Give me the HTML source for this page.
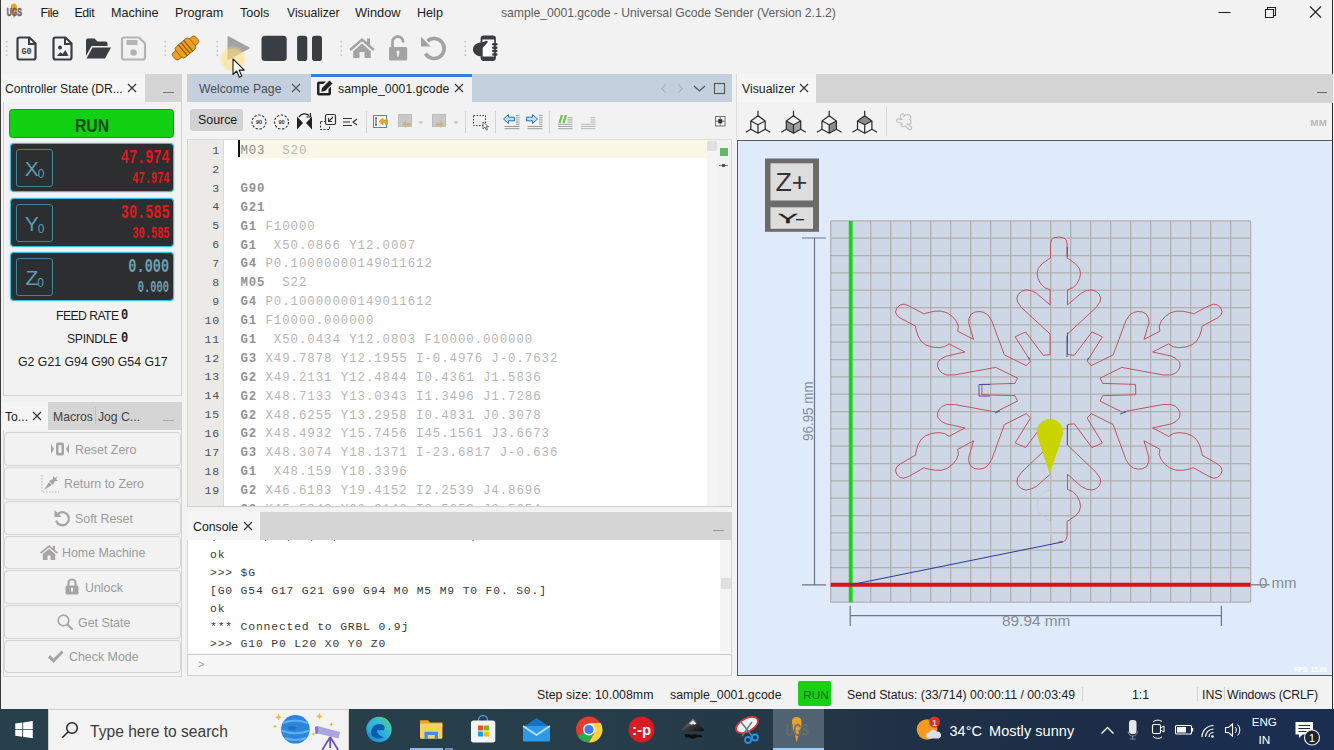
<!DOCTYPE html>
<html lang="en">
<head>
<meta charset="utf-8">
<title>sample_0001.gcode - Universal Gcode Sender (Version 2.1.2)</title>
<style>
*{box-sizing:border-box;margin:0;padding:0}
html,body{width:1334px;height:750px;overflow:hidden}
body{position:relative;background:#f2f2f2;font-family:"Liberation Sans",sans-serif;font-size:12.2px;color:#1c1c1c}
.a{position:absolute}
.t{position:absolute;white-space:pre;line-height:16px}
.mono{font-family:"Liberation Mono",monospace}
svg{position:absolute;overflow:visible}
/* panels */
.tabbar{position:absolute;background:#d5d5d5}
.tab{position:absolute;background:#f5f5f5}
.btn{position:absolute;left:4px;width:177px;height:33.600px;border:1px solid #d3d3d3;border-radius:4px;background:#f2f2f2;color:#9b9b9b;font-size:12.400px}
.btn span{position:absolute;top:8.500px;line-height:16px;white-space:pre}
.dro{position:absolute;left:9.500px;width:164.500px;height:49px;background:#2d2e30;border:1.300px solid #35bfe0;border-radius:4px;box-shadow:0 0 1.500px #4cc8e6}
.dro .ax{position:absolute;left:5.200px;top:5px;width:37px;height:38px;border:1px solid #3e8796;border-radius:3px;color:#5b9db0;font-size:21px;line-height:37px;text-align:center;letter-spacing:-1px}
.dro .ax sub{font-size:12px;vertical-align:-2px}
.dro .big,.dro .small{position:absolute;right:3.500px;white-space:pre;font-family:"Liberation Mono",monospace;transform-origin:100% 50%}
.dro .big{top:3px;font-size:21px;line-height:22px;transform:scaleX(.645);font-weight:bold}
.dro .small{top:27px;font-size:16px;line-height:16px;transform:scaleX(.65);font-weight:bold}
.red{color:#e3181c}.cy{color:#6ea0b1}
.ln{position:absolute;left:188px;width:32.200px;text-align:right;font-family:"Liberation Mono",monospace;font-size:11.600px;letter-spacing:0.900px;color:#505050;line-height:19px}
.code{position:absolute;left:239px;font-family:"Liberation Mono",monospace;font-size:12.400px;letter-spacing:0.930px;line-height:19px;white-space:pre;color:#b6b6b6}
.code b{color:#939393}
.con{position:absolute;left:210px;font-family:"Liberation Mono",monospace;font-size:11.400px;letter-spacing:0.820px;line-height:18px;white-space:pre;color:#383838}
.tb{position:absolute;color:#fff}
</style>
</head>
<body>
<!-- window left edge -->
<div class="a" style="left:0;top:0;width:1px;height:709px;background:#3a3a3a"></div>
<div class="a" style="left:1332.300px;top:0;width:1.200px;height:709px;background:#2a2a2a"></div>
<!-- app icon -->
<svg style="left:0;top:0" width="26" height="24" viewBox="0 0 26 24">
 <path d="M13.900 3.400c1.800 0 2.900 1.200 2.900 2.800v4.800l-1.400 3-1.500 5-1.500-5-1.400-3v-4.800c0-1.600 1.100-2.800 2.900-2.800z" fill="#f0a020"/>
 <text x="6.800" y="15.600" font-family="Liberation Sans, sans-serif" font-weight="bold" font-size="10.600" fill="#6b645c" stroke="#6b645c" stroke-width="0.550" textLength="15.200" lengthAdjust="spacingAndGlyphs">UGS</text>
</svg>
<!-- menu -->
<div class="t" style="left:40.500px;top:5px;font-size:12.400px;letter-spacing:-0.5px">File</div>
<div class="t" style="left:74.500px;top:5px;font-size:12.400px;letter-spacing:-0.4px">Edit</div>
<div class="t" style="left:111px;top:5px;font-size:12.6px">Machine</div>
<div class="t" style="left:175px;top:5px;font-size:12.6px">Program</div>
<div class="t" style="left:240px;top:5px;font-size:12.6px">Tools</div>
<div class="t" style="left:287px;top:5px;font-size:12.2px">Visualizer</div>
<div class="t" style="left:355px;top:5px;font-size:12.8px">Window</div>
<div class="t" style="left:417px;top:5px;font-size:12.6px">Help</div>
<div class="t" style="left:501px;top:5px;font-size:12.2px;color:#5e5e5e;letter-spacing:-0.02px">sample_0001.gcode - Universal Gcode Sender (Version 2.1.2)</div>
<!-- window controls -->
<svg style="left:1210px;top:0" width="124" height="26" viewBox="0 0 124 26" fill="none" stroke="#222" stroke-width="1.1">
 <path d="M8.5 12.5h12"/>
 <path d="M55.500 9.500h8v8h-8z M57.500 9.500v-2h8v8h-2"/>
 <path d="M100 6.500l11 11M111 6.500l-11 11"/>
</svg>
<!-- main toolbar -->
<svg style="left:0;top:30px" width="520" height="40" viewBox="0 30 520 40">
 <!-- separators (dotted grips) -->
 <g fill="#c2c2c2">
  <rect x="5.800" y="41" width="1.600" height="1.600"/><rect x="5.800" y="45.5" width="1.600" height="1.600"/><rect x="5.800" y="50" width="1.600" height="1.600"/><rect x="5.800" y="54.5" width="1.600" height="1.600"/><rect x="164.5" y="41" width="1.600" height="1.600"/><rect x="164.5" y="45.5" width="1.600" height="1.600"/><rect x="164.5" y="50" width="1.600" height="1.600"/><rect x="164.5" y="54.5" width="1.600" height="1.600"/><rect x="216.5" y="41" width="1.600" height="1.600"/><rect x="216.5" y="45.5" width="1.600" height="1.600"/><rect x="216.5" y="50" width="1.600" height="1.600"/><rect x="216.5" y="54.5" width="1.600" height="1.600"/><rect x="340.5" y="41" width="1.600" height="1.600"/><rect x="340.5" y="45.5" width="1.600" height="1.600"/><rect x="340.5" y="50" width="1.600" height="1.600"/><rect x="340.5" y="54.5" width="1.600" height="1.600"/><rect x="464.5" y="41" width="1.600" height="1.600"/><rect x="464.5" y="45.5" width="1.600" height="1.600"/><rect x="464.5" y="50" width="1.600" height="1.600"/><rect x="464.5" y="54.5" width="1.600" height="1.600"/>
 </g>
 <!-- G0 file -->
 <path d="M19.500 37.500h10l6 6v14a2 2 0 0 1-2 2h-14a2 2 0 0 1-2-2v-18a2 2 0 0 1 2-2z" fill="none" stroke="#3a3d42" stroke-width="2.200"/>
 <path d="M29 37.500v6.500h6.500" fill="none" stroke="#3a3d42" stroke-width="2"/>
 <text x="26.500" y="54" font-family="Liberation Mono, monospace" font-size="8.500" font-weight="bold" text-anchor="middle" fill="#3a3d42">G0</text>
 <!-- image file -->
 <path d="M55.500 37.500h10l6 6v14a2 2 0 0 1-2 2h-14a2 2 0 0 1-2-2v-18a2 2 0 0 1 2-2z" fill="none" stroke="#3a3d42" stroke-width="2.200"/>
 <path d="M65 37.500v6.500h6.500" fill="none" stroke="#3a3d42" stroke-width="2"/>
 <circle cx="60" cy="47.500" r="2" fill="#3a3d42"/>
 <path d="M57 56l3.500-4 2 2 3-4 3 6z" fill="#3a3d42"/>
 <!-- open folder -->
 <path d="M86 40.500a2 2 0 0 1 2-2h6.500l3 3h8a2 2 0 0 1 2 2v2.500h-16l-5.500 10z" fill="#3a3d42"/>
 <path d="M92.500 47.500h18.500l-6 11h-18.500z" fill="#3a3d42"/>
 <!-- save (disabled) -->
 <path d="M124 37.500h15l6 6v14a2 2 0 0 1-2 2h-19a2 2 0 0 1-2-2v-18a2 2 0 0 1 2-2z" fill="none" stroke="#b4b4b4" stroke-width="2.200"/>
 <rect x="126.500" y="40" width="11" height="5" fill="#b4b4b4"/>
 <circle cx="133.500" cy="52.500" r="3.300" fill="#b4b4b4"/>
 <!-- connect (orange plug) -->
 <g transform="translate(185.500 48) rotate(-40)">
  <rect x="-15" y="-4.500" width="30" height="9" rx="3" fill="#f0a020" stroke="#8a5a10" stroke-width="0.800"/>
  <rect x="-9" y="-7" width="18" height="14" rx="3" fill="#f0a020" stroke="#8a5a10" stroke-width="0.800"/>
  <path d="M-3.500 -7v14M0 -7v14M3.500 -7v14" stroke="#8a5a10" stroke-width="1.300"/>
 </g>
 <!-- play (disabled) -->
 <path d="M228.300 37l20.500 11-20.500 11z" fill="#a3a3a3" stroke="#a3a3a3" stroke-width="1.600" stroke-linejoin="round"/>
 <!-- mouse highlight -->
 <defs><radialGradient id="mh"><stop offset="0" stop-color="#fce17a" stop-opacity="0.620"/><stop offset="0.720" stop-color="#fce17a" stop-opacity="0.600"/><stop offset="1" stop-color="#fce17a" stop-opacity="0"/></radialGradient></defs>
 <circle cx="232.800" cy="59.200" r="13.800" fill="url(#mh)"/>
 <!-- stop -->
 <rect x="261.500" y="35.800" width="25.200" height="25.200" rx="3.500" fill="#3a3d42"/>
 <!-- pause -->
 <rect x="297.100" y="35.800" width="10.200" height="25.200" rx="2.800" fill="#3a3d42"/>
 <rect x="312" y="35.800" width="10" height="25.200" rx="2.800" fill="#3a3d42"/>
 <!-- home (disabled) -->
 <path d="M362 38l-12.700 11 1.600 1.900 11.100-9.600 11.100 9.600 1.600-1.900-4.600-4v-6.500h-3.200v3.700z" fill="#a3a3a3"/>
 <path d="M362 43.600l-8.800 7.600v6.800h6.300v-6h5v6h6.300v-6.800z" fill="#a3a3a3"/>
 <!-- lock open (disabled) -->
 <path d="M392.500 47v-4.500a5.300 5.300 0 0 1 10.600-1.200" fill="none" stroke="#a3a3a3" stroke-width="2.800" stroke-linecap="round"/>
 <rect x="389" y="47" width="18.200" height="13.400" rx="1.500" fill="#a3a3a3"/>
 <circle cx="398" cy="52" r="1.600" fill="#f2f2f2"/><rect x="397.100" y="52" width="1.800" height="4.500" fill="#f2f2f2"/>
 <!-- reset (disabled) -->
 <path d="M427.500 41a10 10 0 1 1-2 12.500" fill="none" stroke="#a3a3a3" stroke-width="3.700"/>
 <path d="M421 36.800v9.700h9.700z" fill="#a3a3a3"/>
 <!-- pendant phone -->
 <rect x="481.500" y="36.500" width="13.500" height="23.500" rx="2.200" fill="#fff" stroke="#3a3d42" stroke-width="1.800"/>
 <rect x="481.500" y="36.500" width="13.500" height="3" rx="1" fill="#3a3d42"/><rect x="481.500" y="56.500" width="13.500" height="3.500" rx="1" fill="#3a3d42"/>
 <path d="M482.500 42.200c-5.500 0-9.500 3-9.500 7.200s4 7 9.500 7v-8.500l5-5.500c.8-1.200-.5-2.300-1.800-1.500z" fill="#3a3d42"/>
 <rect x="492" y="43" width="5.500" height="2.500" rx="1.200" fill="#3a3d42"/><rect x="492" y="46.400" width="5.500" height="2.500" rx="1.200" fill="#3a3d42"/><rect x="492" y="49.800" width="5.500" height="2.500" rx="1.200" fill="#3a3d42"/><rect x="492" y="53.200" width="5.500" height="2.500" rx="1.200" fill="#3a3d42"/>
</svg>
<!-- cursor -->
<svg style="left:232.300px;top:58.400px;z-index:20" width="14" height="20" viewBox="0 0 14 20"><path d="M1 1v15.500l3.700-3.500 2.700 6.200 2.400-1.100-2.700-6h5.200z" fill="#fff" stroke="#1a1a1a" stroke-width="1.100" stroke-linejoin="round"/></svg>
<!-- LEFT: controller state panel -->
<div class="tabbar" style="left:3px;top:74px;width:179px;height:28px"></div>
<div class="tab" style="left:3px;top:74px;width:142px;height:28px"></div>
<div class="t" style="left:5px;top:81px;font-size:12.2px;letter-spacing:-0.1px">Controller State (DR...</div>
<svg style="left:127px;top:83px" width="10" height="10" viewBox="0 0 10 10"><path d="M1 1l8 8M9 1l-8 8" stroke="#333" stroke-width="1.100"/></svg>
<div class="a" style="left:163px;top:92px;width:11px;height:1px;background:#777"></div>
<div class="a" style="left:3px;top:102px;width:179px;height:294px;border:1px solid #d2d2d2;border-top:none;background:#f2f2f2"></div>
<!-- RUN -->
<div class="a" style="left:9px;top:109px;width:165px;height:29px;background:#12d012;border:1px solid #0e9a12;border-radius:3.500px"></div>
<div class="t" style="left:42px;top:115.400px;width:100px;text-align:center;font-size:18.500px;line-height:22px;font-weight:bold;color:#0c4d12;transform:scaleX(.85)">RUN</div>
<!-- DROs -->
<div class="dro" style="top:142.800px"><div class="ax">X<sub>0</sub></div><div class="big red">47.974</div><div class="small red">47.974</div></div>
<div class="dro" style="top:197.500px"><div class="ax">Y<sub>0</sub></div><div class="big red">30.585</div><div class="small red">30.585</div></div>
<div class="dro" style="top:252px"><div class="ax">Z<sub>0</sub></div><div class="big cy">0.000</div><div class="small cy">0.000</div></div>
<div class="t" style="left:56px;top:308px;font-size:12.2px;letter-spacing:-0.55px">FEED RATE</div>
<div class="t mono" style="left:121px;top:308.300px;font-size:15px;font-weight:bold;transform:scaleX(.8);transform-origin:0 50%">0</div>
<div class="t" style="left:67px;top:331px;font-size:12.2px;letter-spacing:-0.3px">SPINDLE</div>
<div class="t mono" style="left:121px;top:331.300px;font-size:15px;font-weight:bold;transform:scaleX(.8);transform-origin:0 50%">0</div>
<div class="t" style="left:18px;top:354px;font-size:12.300px">G2 G21 G94 G90 G54 G17</div>

<!-- LEFT: toolbox panel -->
<div class="tabbar" style="left:3px;top:402px;width:179px;height:28px"></div>
<div class="tab" style="left:3px;top:402px;width:45px;height:28px"></div>
<div class="t" style="left:5px;top:409px;font-size:12.2px">To...</div>
<svg style="left:32px;top:411px" width="10" height="10" viewBox="0 0 10 10"><path d="M1 1l8 8M9 1l-8 8" stroke="#333" stroke-width="1.100"/></svg>
<div class="t" style="left:53px;top:409px;font-size:12.2px;color:#444">Macros</div>
<div class="a" style="left:95px;top:407px;width:1px;height:17px;background:#c2c2c2"></div>
<div class="t" style="left:98px;top:409px;font-size:12.2px;color:#444">Jog C...</div>
<div class="a" style="left:163px;top:420px;width:11px;height:1px;background:#aaa"></div>
<div class="a" style="left:3px;top:430px;width:179px;height:247px;border:1px solid #d6d6d6;border-top:none"></div>

<div class="btn" style="top:432px"><svg style="left:46px;top:9px" width="18" height="14" viewBox="0 0 18 14"><path d="M0 2l3 5-3 5zM18 2l-3 5 3 5z" fill="#a5a5a5"/><rect x="5" y="0.500" width="8" height="13" rx="2" fill="#a5a5a5"/><rect x="7.500" y="3" width="3" height="8" rx="1" fill="#f2f2f2"/></svg><span style="left:70px">Reset Zero</span></div>
<div class="btn" style="top:466.600px"><svg style="left:36px;top:7px" width="19" height="18" viewBox="0 0 19 18"><path d="M1 0v17h17" fill="none" stroke="#b5b5b5" stroke-width="1" stroke-dasharray="1.500 1.500"/><path d="M3 15l5-8 3 3zM8 6l4-2 0-3 2 2 3-2-2 3 2 2-3 0-2 4z" fill="#a5a5a5"/></svg><span style="left:59px">Return to Zero</span></div>
<div class="btn" style="top:501.200px"><svg style="left:48px;top:7px" width="18" height="18" viewBox="0 0 18 18"><path d="M5.500 4.500a6.500 6.500 0 1 1-2 8" fill="none" stroke="#a5a5a5" stroke-width="2.300" stroke-linecap="round"/><path d="M1.500 1v7h7z" fill="#a5a5a5"/></svg><span style="left:70px">Soft Reset</span></div>
<div class="btn" style="top:535.800px"><svg style="left:35px;top:8px" width="18" height="15" viewBox="0 0 18 15"><path d="M9 0l-9 7.500 1.200 1.300 7.800-6.500 7.800 6.500 1.200-1.300-3-2.500v-4h-2.200v2.200z" fill="#a5a5a5"/><path d="M9 3.800l-6.200 5.200v6h4.700v-4.500h3v4.500h4.700v-6z" fill="#a5a5a5"/></svg><span style="left:57px">Home Machine</span></div>
<div class="btn" style="top:570.400px"><svg style="left:60px;top:7px" width="14" height="17" viewBox="0 0 14 17"><path d="M3.500 8v-3a3.500 3.500 0 0 1 7 0v3" fill="none" stroke="#a5a5a5" stroke-width="2.200"/><rect x="0.500" y="7.500" width="13" height="9" rx="1.500" fill="#a5a5a5"/><rect x="6" y="10" width="2" height="3.500" fill="#f2f2f2"/></svg><span style="left:80px">Unlock</span></div>
<div class="btn" style="top:605px"><svg style="left:52px;top:8px" width="16" height="16" viewBox="0 0 16 16"><circle cx="6.500" cy="6.500" r="5.300" fill="none" stroke="#a5a5a5" stroke-width="1.700"/><path d="M10.500 10.500l4.500 4.500" stroke="#a5a5a5" stroke-width="2.200" stroke-linecap="round"/></svg><span style="left:73px">Get State</span></div>
<div class="btn" style="top:639.600px"><svg style="left:42px;top:9px" width="17" height="14" viewBox="0 0 17 14"><path d="M1 7.500l2.200-2.200 3.300 3.300 8-8 2 2-10 10.400z" fill="#a5a5a5"/></svg><span style="left:64px">Check Mode</span></div>
<!-- EDITOR -->
<div class="a" style="left:187px;top:74px;width:545px;height:28px;background:#c4d0dd"></div>
<div class="a" style="left:311px;top:74px;width:161px;height:28px;background:#f2f2f2;border-top:3px solid #3b7fd0"></div>
<div class="t" style="left:199px;top:81px;font-size:12.2px;color:#4a4f55">Welcome Page</div>
<svg style="left:291px;top:83px" width="10" height="10" viewBox="0 0 10 10"><path d="M1 1l8 8M9 1l-8 8" stroke="#555" stroke-width="1.100"/></svg>
<svg style="left:316px;top:80px" width="17" height="16" viewBox="0 0 17 16"><path d="M1 3.500a2 2 0 0 1 2-2h7l-2.500 2.500h-4v9h9v-4l2.500-2.500v7a2 2 0 0 1-2 2h-10a2 2 0 0 1-2-2z" fill="#222"/><path d="M6 8l7.500-7.500 3 3-7.500 7.500-3.800.8z" fill="#222"/></svg>
<div class="t" style="left:338px;top:81px;font-size:12.2px;letter-spacing:0.1px">sample_0001.gcode</div>
<svg style="left:454px;top:83px" width="10" height="10" viewBox="0 0 10 10"><path d="M1 1l8 8M9 1l-8 8" stroke="#333" stroke-width="1.100"/></svg>
<svg style="left:655px;top:80px" width="75" height="16" viewBox="655 80 75 16" fill="none"><path d="M666 84l-4 4.500 4 4.500M678 84l4 4.500-4 4.500" stroke="#a9b4c0" stroke-width="1.100"/><path d="M694 86l5.500 5 5.500-5" stroke="#555" stroke-width="1.200"/><rect x="714.500" y="83.500" width="10" height="10" stroke="#555" stroke-width="1.100"/></svg>
<div class="a" style="left:190px;top:109px;width:53px;height:22px;background:#d2d2d2;border-radius:3px"></div>
<div class="t" style="left:198px;top:112px;font-size:12.400px">Source</div>
<svg style="left:245px;top:107px" width="487" height="30" viewBox="245 106 487 30" fill="none">
 <g stroke="#333" stroke-width="1.100">
  <circle cx="259" cy="121" r="7" stroke-dasharray="2.400 1.600"/>
  <circle cx="281.500" cy="121" r="7" stroke-dasharray="2.400 1.600"/>
 </g>
 <text x="259" y="123" font-family="Liberation Sans, sans-serif" font-size="5.500" font-weight="bold" text-anchor="middle" fill="#333">90</text>
 <text x="281.500" y="123" font-family="Liberation Sans, sans-serif" font-size="5.500" font-weight="bold" text-anchor="middle" fill="#333">90</text>
 <path d="M297 115.500l6 6.500-6 6.500zM312 115.500l-6 6.500 6 6.500z" fill="#222"/>
 <path d="M299 116a6.500 6.500 0 0 1 10-1.500" stroke="#222" stroke-width="1.300"/><path d="M310.500 112v4h-4" stroke="#222" stroke-width="1.200"/>
 <rect x="320.500" y="120.500" width="9" height="8" stroke="#333" stroke-dasharray="2 1.500"/>
 <rect x="325.500" y="113.500" width="10" height="10" rx="1.500" stroke="#333" stroke-width="1.200" fill="#f2f2f2"/>
 <path d="M333 116l-4.500 4.500M328.500 117v3.500h3.500" stroke="#333" stroke-width="1.100"/>
 <path d="M343 117.500h9M343 121h7M343 124.500h9M357 118l-4 3 4 3" stroke="#333" stroke-width="1.200"/>
 <path d="M366.500 110v22M465.500 110v22M495.500 110v22M549.500 110v22" stroke="#d4d4d4" stroke-width="1"/>
 <rect x="373.500" y="114.500" width="13" height="12" stroke="#5b87b8" fill="#f7f7f7"/>
 <path d="M376 117v7M375 117h2M375 124h2" stroke="#333" stroke-width="0.900"/>
 <path d="M379 120.500l4-3.500v2h4.500v4.500h-2v-2h-2.500v2.500z" fill="#f3a825" stroke="#b87a10" stroke-width="0.500"/>
 <rect x="398.500" y="113.500" width="13" height="12" fill="#c8c8c8" stroke="#bdbdbd"/>
 <path d="M402 123l4-3.500v2.200h4.500v3h-4.500v2.200z" fill="#c9b58a"/>
 <path d="M418.500 120.500l2.500 2.500 2.500-2.500z" fill="#bbb"/>
 <rect x="432.500" y="113.500" width="13" height="12" fill="#c8c8c8" stroke="#bdbdbd"/>
 <path d="M444 123l-4-3.500v2.200h-4.500v3h4.500v2.200z" fill="#c9b58a"/>
 <path d="M453.500 120.500l2.500 2.500 2.500-2.500z" fill="#bbb"/>
 <rect x="473.500" y="114.500" width="12" height="10" stroke="#333" stroke-dasharray="1.500 1.500"/>
 <path d="M483 121v7l2-1.800 1.500 3 1-.5-1.400-3h2.500z" fill="#fff" stroke="#333" stroke-width="0.700"/>
 <path d="M503.500 118l5-4.500v2.700h6v3.600h-6v2.700z" fill="#bfe0fa" stroke="#2a6fb0" stroke-width="1"/>
 <path d="M516 114.500h3.500M516 116.700h3.500M516 118.900h3.500M516 121.100h3.500M516 123.300h3.500M504.500 125.500h15M504.500 127.700h15" stroke="#8f8f8f" stroke-width="0.900"/>
 <path d="M537.500 118l-5-4.500v2.700h-6v3.600h6v2.700z" fill="#bfe0fa" stroke="#2a6fb0" stroke-width="1"/>
 <path d="M539 114.500h3.500M539 116.700h3.500M539 118.900h3.500M539 121.100h3.500M539 123.300h3.500M527.500 125.500h15M527.500 127.700h15" stroke="#8f8f8f" stroke-width="0.900"/>
 <path d="M559.500 122l2.500-8M563.500 122l2.500-8" stroke="#6dc04a" stroke-width="2.200"/>
 <path d="M567.500 116.700h5M567.500 118.900h5M567.500 121.100h5M558 123.300h14.500M558 125.500h14.500M558 127.700h14.500" stroke="#9a9a9a" stroke-width="0.900"/>
 <path d="M590.500 116.700h5M590.500 118.900h5M590.500 121.100h5M581 123.300h14.500M581 125.500h14.500M581 127.700h14.500" stroke="#b0b0b0" stroke-width="0.900"/>
 <rect x="715.500" y="115.500" width="9.500" height="9.500" stroke="#777" stroke-width="1"/><path d="M720.200 115.500v9.500M715.500 120.200h9.500" stroke="#777"/><rect x="718.200" y="118.200" width="4" height="4" fill="#333"/>
</svg>
<div class="a" style="left:187px;top:139px;width:545px;height:367.500px;overflow:hidden;background:#fff;border-top:1px solid #dcdcdc;border-bottom:1px solid #cfcfcf">
 <div class="a" style="left:0;top:0;width:37px;height:370px;background:#ebeae6;border-left:1px solid #d5d5d5;border-right:1px solid #dadada"></div>
 <div class="a" style="left:53px;top:-0.500px;width:466.500px;height:18.800px;background:#fbf7e7"></div>
 <div class="a" style="left:519.500px;top:0;width:10.500px;height:370px;background:#f4f4f4"></div>
 <div class="a" style="left:520px;top:1px;width:10px;height:10px;background:#e0e0e0"></div>
 <div class="a" style="left:530px;top:0;width:15px;height:370px;background:#f2f2f2;border-right:1px solid #d5d5d5"></div>
 <div class="a" style="left:533px;top:8px;width:8px;height:7.500px;background:#5fb966"></div>
 <div class="a" style="left:532px;top:24.500px;width:9px;height:1px;background:#777"></div><div class="a" style="left:535px;top:23.500px;width:3px;height:3px;background:#555"></div>
 <div class="a" style="left:51.200px;top:0;width:2.200px;height:17px;background:#111"></div>
 <div class="ln" style="left:1px;top:0.80px">1</div><div class="code" style="left:53.400px;top:2.10px"><b style="font-weight:normal;color:#8d8d8d">M03</b>  S20</div>
 <div class="ln" style="left:1px;top:19.69px">2</div><div class="code" style="left:53.400px;top:20.99px"><b></b></div>
 <div class="ln" style="left:1px;top:38.58px">3</div><div class="code" style="left:53.400px;top:39.88px"><b>G90</b></div>
 <div class="ln" style="left:1px;top:57.47px">4</div><div class="code" style="left:53.400px;top:58.77px"><b>G21</b></div>
 <div class="ln" style="left:1px;top:76.36px">5</div><div class="code" style="left:53.400px;top:77.66px"><b>G1</b> F10000</div>
 <div class="ln" style="left:1px;top:95.25px">6</div><div class="code" style="left:53.400px;top:96.55px"><b>G1</b>  X50.0866 Y12.0007</div>
 <div class="ln" style="left:1px;top:114.14px">7</div><div class="code" style="left:53.400px;top:115.44px"><b>G4</b> P0.10000000149011612</div>
 <div class="ln" style="left:1px;top:133.03px">8</div><div class="code" style="left:53.400px;top:134.33px"><b>M05</b>  S22</div>
 <div class="ln" style="left:1px;top:151.92px">9</div><div class="code" style="left:53.400px;top:153.22px"><b>G4</b> P0.10000000149011612</div>
 <div class="ln" style="left:1px;top:170.81px">10</div><div class="code" style="left:53.400px;top:172.11px"><b>G1</b> F10000.000000</div>
 <div class="ln" style="left:1px;top:189.70px">11</div><div class="code" style="left:53.400px;top:191.00px"><b>G1</b>  X50.0434 Y12.0803 F10000.000000</div>
 <div class="ln" style="left:1px;top:208.59px">12</div><div class="code" style="left:53.400px;top:209.89px"><b>G3</b> X49.7878 Y12.1955 I-0.4976 J-0.7632</div>
 <div class="ln" style="left:1px;top:227.48px">13</div><div class="code" style="left:53.400px;top:228.78px"><b>G2</b> X49.2131 Y12.4844 I0.4361 J1.5836</div>
 <div class="ln" style="left:1px;top:246.37px">14</div><div class="code" style="left:53.400px;top:247.67px"><b>G2</b> X48.7133 Y13.0343 I1.3496 J1.7286</div>
 <div class="ln" style="left:1px;top:265.26px">15</div><div class="code" style="left:53.400px;top:266.56px"><b>G2</b> X48.6255 Y13.2958 I0.4831 J0.3078</div>
 <div class="ln" style="left:1px;top:284.15px">16</div><div class="code" style="left:53.400px;top:285.45px"><b>G2</b> X48.4932 Y15.7456 I45.1561 J3.6673</div>
 <div class="ln" style="left:1px;top:303.04px">17</div><div class="code" style="left:53.400px;top:304.34px"><b>G3</b> X48.3074 Y18.1371 I-23.6817 J-0.636</div>
 <div class="ln" style="left:1px;top:321.93px">18</div><div class="code" style="left:53.400px;top:323.23px"><b>G1</b>  X48.159 Y18.3396</div>
 <div class="ln" style="left:1px;top:340.82px">19</div><div class="code" style="left:53.400px;top:342.12px"><b>G2</b> X46.6183 Y19.4152 I2.2539 J4.8696</div>
 <div class="ln" style="left:1px;top:359.71px">20</div><div class="code" style="left:53.400px;top:361.01px"><b>G2</b> X45.5342 Y20.9146 I3.5659 J3.5654</div>
</div>
<!-- CONSOLE -->
<div class="tabbar" style="left:187px;top:512px;width:545px;height:28px"></div>
<div class="tab" style="left:187px;top:512px;width:73px;height:28px"></div>
<div class="t" style="left:193px;top:519px;font-size:12.300px">Console</div>
<svg style="left:243px;top:521px" width="10" height="10" viewBox="0 0 10 10"><path d="M1 1l8 8M9 1l-8 8" stroke="#333" stroke-width="1.100"/></svg>
<div class="a" style="left:713px;top:530px;width:11px;height:1px;background:#999"></div>
<div class="a" style="left:187px;top:540px;width:545px;height:112.500px;background:#fff;border-left:1px solid #d5d5d5;border-right:1px solid #d5d5d5;overflow:hidden">
 <div class="a" style="left:532px;top:0;width:12px;height:112px;background:#f4f4f4"></div>
 <div class="a" style="left:533px;top:37.500px;width:10px;height:11px;background:#e0e0e0"></div>
 <div class="con" style="left:22px;top:-13px">(ctrl-x, $, ?, ~, ! = $$ to enable)</div>
 <div class="con" style="left:22px;top:6.3px">ok</div>
 <div class="con" style="left:22px;top:24.1px">&gt;&gt;&gt; $G</div>
 <div class="con" style="left:22px;top:41.9px">[G0 G54 G17 G21 G90 G94 M0 M5 M9 T0 F0. S0.]</div>
 <div class="con" style="left:22px;top:59.7px">ok</div>
 <div class="con" style="left:22px;top:77.5px">*** Connected to GRBL 0.9j</div>
 <div class="con" style="left:22px;top:95.3px">&gt;&gt;&gt; G10 P0 L20 X0 Y0 Z0</div>
</div>
<div class="a" style="left:187px;top:654px;width:545px;height:22px;background:#f7f7f7;border:1px solid #cdcdcd"></div>
<div class="t mono" style="left:198px;top:657px;font-size:11px;color:#999">&gt;</div>

<!-- STATUS BAR -->
<div class="t" style="left:537px;top:686.500px;font-size:12.300px;letter-spacing:0.05px">Step size: 10.008mm</div>
<div class="t" style="left:670px;top:686.500px;font-size:12.300px;letter-spacing:0.05px">sample_0001.gcode</div>
<div class="a" style="left:798px;top:681px;width:33px;height:25px;background:#14d114;border-radius:2px"></div>
<div class="t" style="left:803.300px;top:686.500px;font-size:11.800px;color:#0f6e14">RUN</div>
<div class="t" style="left:847px;top:686.500px;font-size:12.300px;letter-spacing:0">Send Status: (33/714) 00:00:11 / 00:03:49</div>
<div class="a" style="left:1082px;top:687px;width:1px;height:14px;background:#d4d4d4"></div>
<div class="t" style="left:1132px;top:686.500px;font-size:12.300px">1:1</div>
<div class="a" style="left:1197px;top:687px;width:1px;height:14px;background:#d4d4d4"></div>
<div class="t" style="left:1202px;top:686.500px;font-size:12.300px">INS</div>
<div class="a" style="left:1224px;top:687px;width:1px;height:14px;background:#d4d4d4"></div>
<div class="t" style="left:1227px;top:686.500px;font-size:12.300px;letter-spacing:-0.2px">Windows (CRLF)</div>

<!-- TASKBAR -->
<div class="a" style="left:0;top:709px;width:1334px;height:41px;background:linear-gradient(90deg,#28404c 0%,#263d4a 45%,#233846 60%,#1f3146 68%,#1c2d48 82%,#1a2e52 100%)"></div>
<svg style="left:14.500px;top:721px" width="18" height="17.500" viewBox="0 0 20 20" fill="#fff"><path d="M0 2.800l8-1.100v7.600h-8zM9 1.600l11-1.600v9.300h-11zM0 10.300h8v7.600l-8-1.100zM9 10.300h11v9.400l-11-1.600z"/></svg>
<div class="a" style="left:48px;top:709px;width:301px;height:41px;background:#f3f3f3;border:1px solid #cfcfcf;border-bottom:none"></div>
<svg style="left:61px;top:721px" width="18" height="18" viewBox="0 0 18 18" fill="none" stroke="#222" stroke-width="1.500"><circle cx="11" cy="7" r="5.300"/><path d="M7.200 10.800l-6 6"/></svg>
<div class="t" style="left:90px;top:722px;font-size:15.600px;line-height:20px;color:#3b3b3b">Type here to search</div>
<svg style="left:272px;top:712px" width="76" height="38" viewBox="0 0 76 38">
 <circle cx="23.400" cy="17.300" r="14.300" fill="#2b86dc"/><path d="M11 11c7-3.500 17-3.500 24.500 0M9.500 18.500c8 3.500 20 3.500 27.800 0M13 26c6 2.500 15 2.500 21 0" stroke="#5fb2f2" stroke-width="2" fill="none"/><ellipse cx="20" cy="16" rx="4" ry="2" fill="#1f6fc4"/>
 <path d="M6.600 1.800l1 2.400 2.400 1-2.400 1-1 2.400-1-2.400-2.400-1 2.400-1zM47.400 0.800l1 2.400 2.400 1-2.400 1-1 2.400-1-2.400-2.400-1 2.400-1zM59.400 10l.7 1.700 1.700.7-1.700.7-.7 1.700-.7-1.700-1.700-.7 1.700-.7zM3 12.300l.6 1.500 1.500.6-1.500.6-.6 1.500-.6-1.500-1.500-.6 1.500-.6zM41.400 20l.6 1.500 1.500.6-1.500.6-.6 1.500-.6-1.500-1.500-.6 1.500-.6z" fill="#f2b63a"/>
 <path d="M45.500 14l22.500 6 -1.500 6.500-23-5.500z" fill="#aaa6dd"/><path d="M45.500 14l-2.500 1 .5 7 2.500-.5z" fill="#7a6fd0"/>
 <path d="M58.200 25l-8 13M58.200 25l8 13M58.200 25v11" stroke="#6a52c4" stroke-width="1.800"/>
</svg>
<!-- taskbar app icons -->
<div class="a" style="left:773px;top:709px;width:51px;height:41px;background:#516373"></div>
<div class="a" style="left:773px;top:747.700px;width:51px;height:2.300px;background:#9ec8f2"></div>
<div class="a" style="left:410px;top:748px;width:33px;height:2px;background:#8fb8ea"></div>
<div class="a" style="left:444.500px;top:748px;width:8px;height:2px;background:#6f8fb5"></div>
<svg style="left:360px;top:709px" width="470" height="41" viewBox="360 709 470 41">
 <!-- edge -->
 <defs><linearGradient id="eg" x1="0" y1="1" x2="1" y2="0"><stop offset="0" stop-color="#1b7fd3"/><stop offset="0.550" stop-color="#2fb3d8"/><stop offset="1" stop-color="#6fd85a"/></linearGradient></defs>
 <circle cx="379" cy="729.500" r="12.700" fill="url(#eg)"/>
 <path d="M371.500 735c-1.500-6.500 2.500-11 8-11 3.200 0 5.200 1.600 5.200 3.600 0 1.500-1 2.600-1 2.600h-6.700c0 3.200 2.600 6.200 7.200 7.200-5 2.200-10.500 1.200-12.700-2.400z" fill="#0b5cae"/>
 <path d="M366.500 727c2-5 7-8 12.500-8 6 0 11 3.500 12.500 9-2.500-3-6-4.500-11-4.500-6 0-10 3.500-9.500 10-3-1.500-5-4-4.500-6.500z" fill="#35bfdc" opacity="0.550"/>
 <!-- explorer -->
 <path d="M420 720.200h8l2 2.300h12.400v5h-22.400z" fill="#e8a623"/>
 <rect x="420" y="723.600" width="22.400" height="15.100" rx="1" fill="#f8d25e"/>
 <path d="M424.500 738.700v-7h13.500v7h-3.200v-3.800h-7.100v3.800z" fill="#3e8fdb"/>
 <!-- store -->
 <path d="M478.500 722v-2a4.500 4.500 0 0 1 9 0v2" fill="none" stroke="#3a9bdc" stroke-width="1.400"/>
 <rect x="471" y="720.400" width="24.300" height="22" rx="2.500" fill="#f4f4f4"/>
 <rect x="478" y="725.500" width="5" height="5" fill="#f25022"/><rect x="484" y="725.500" width="5" height="5" fill="#7fba00"/><rect x="478" y="731.500" width="5" height="5" fill="#00a4ef"/><rect x="484" y="731.500" width="5" height="5" fill="#ffb900"/>
 <!-- mail -->
 <path d="M523 727l13.500-9 13.500 9z" fill="#1572c4"/>
 <rect x="523" y="726" width="27" height="15.500" rx="1" fill="#2d9be8"/>
 <path d="M523 726l13.500 9 13.500-9" fill="none" stroke="#bfe3fb" stroke-width="1.600"/>
 <!-- chrome -->
 <circle cx="589" cy="729.500" r="13" fill="#e33b2e"/>
 <path d="M589 729.500l-11.300 6.500a13 13 0 0 0 11.300 6.500l5.600-9.700z" fill="#2da94f"/>
 <path d="M589 729.500l5.600 3.300-5.600 9.700a13 13 0 0 0 11.700-19.500h-11.700z" fill="#fdd23d"/>
 <circle cx="589" cy="729.500" r="6" fill="#fff"/><circle cx="589" cy="729.500" r="4.600" fill="#3d7fe8"/>
 <!-- red p -->
 <circle cx="641.500" cy="729.500" r="13" fill="#d81b24"/>
 <text x="641.500" y="735" font-family="Liberation Sans, sans-serif" font-size="15" font-weight="bold" text-anchor="middle" fill="#fff">:-p</text>
 <!-- inkscape -->
 <defs><linearGradient id="ik" x1="0" y1="0" x2="1" y2="1"><stop offset="0" stop-color="#c8c8c8"/><stop offset="0.500" stop-color="#3a3a3a"/><stop offset="1" stop-color="#0c0c0c"/></linearGradient></defs>
 <path d="M693 718.500l10.800 10.500c.9.900.4 2.200-.9 2.200h-19.800c-1.300 0-1.800-1.300-.9-2.200z" fill="url(#ik)"/>
 <path d="M689.500 723.500l3.500-3.300 3.500 3.300-1.800 1.300-1.700-.9-1.700.9z" fill="#e8e8e8"/>
 <path d="M685 734.500c2.600-1.300 5.200.9 7.800 0s4.300.9 6.900.4c1.700 0 2.600.9 2.600 1.700s-2.600.9-4.300.4-2.600 1.700-5.200 1.700-2.600-1.700-5.200-1.300-3.500-1.700-2.600-2.900z" fill="#0e0e0e"/>
 <!-- snip -->
 <ellipse cx="747" cy="725" rx="12" ry="6.500" transform="rotate(-28 747 725)" fill="#f3f3f3" stroke="#d4343a" stroke-width="1.800"/>
 <path d="M741 722l11 14M752 722l-10 14" stroke="#6b7b8c" stroke-width="1.500"/>
 <circle cx="755" cy="737.500" r="3" fill="none" stroke="#2b8de0" stroke-width="1.800"/><circle cx="748" cy="740" r="3" fill="none" stroke="#2b8de0" stroke-width="1.800"/>
 <!-- ugs -->
 <path d="M796.700 717c2.600 0 4.700 1.600 4.700 3.800v6l-2 4.500-2.700 11-2.700-11-2-4.500v-6c0-2.200 2.100-3.800 4.700-3.800z" fill="#e7a02e"/>
 <text x="785.400" y="736" font-family="Liberation Sans, sans-serif" font-size="16" font-weight="bold" fill="#6f6d66" fill-opacity="0.900" textLength="23.400" lengthAdjust="spacingAndGlyphs">UGS</text>
</svg>
<!-- weather -->
<svg style="left:914px;top:715px" width="30" height="30" viewBox="914 715 30 30">
 <circle cx="927" cy="729.500" r="10.300" fill="#f39a1f"/>
 <path d="M929 738.500a3 3 0 0 1 .3-6 4 4 0 0 1 7.200-.8 3.500 3.500 0 0 1 2 6.800z" fill="#d9dfe8"/>
 <circle cx="934.500" cy="722" r="5.500" fill="#d8312a"/>
 <text x="934.500" y="725.500" font-family="Liberation Sans, sans-serif" font-size="9" text-anchor="middle" fill="#fff">1</text>
</svg>
<div class="tb t" style="left:949.500px;top:721px;font-size:14.500px;line-height:20px">34°C</div>
<div class="tb t" style="left:989px;top:721px;font-size:14.500px;line-height:20px;letter-spacing:0.05px">Mostly sunny</div>
<svg style="left:1095.700px;top:715px" width="150" height="30" viewBox="1095 715 150 30" fill="none" stroke="#fff">
 <path d="M1100.500 733.500l6-6 6 6" stroke-width="1.400"/>
 <rect x="1128" y="720" width="7.500" height="14" rx="3" fill="#e6e6e6" stroke="none"/><path d="M1127.200 731.500a4.600 4.600 0 0 0 9.200 0M1131.800 736v2.500M1129 739h5.600" stroke-width="0.900" stroke="#8d97a8"/>
 <rect x="1151.500" y="724.500" width="8" height="9" rx="1.500" stroke-width="1.100"/><path d="M1159.500 728l3.500-2v6l-3.500-2M1152 722a7 7 0 0 1 9-.5M1152 736.500a7 7 0 0 0 9 .5" stroke-width="1"/>
 <rect x="1174.500" y="725.500" width="16" height="8.500" rx="1" stroke-width="1.100"/><rect x="1176" y="727" width="9" height="5.500" fill="#fff" stroke="none"/><path d="M1191.500 728v3.500" stroke-width="1.400"/>
 <path d="M1201 737a11.500 11.500 0 0 1 11.500-11.500M1204.500 737a8 8 0 0 1 8-8M1208 737a4.500 4.500 0 0 1 4.500-4.500" stroke-width="1.200"/><circle cx="1211.500" cy="736.500" r="1.200" fill="#fff" stroke="none"/>
 <path d="M1224.500 727.500h3l4-3.500v12l-4-3.500h-3z" stroke-width="1.100"/><path d="M1234 727a4 4 0 0 1 0 6M1236.500 724.500a7.500 7.500 0 0 1 0 11" stroke-width="1"/>
</svg>
<div class="tb t" style="left:1244.300px;top:713.500px;width:40px;text-align:center;font-size:11.600px;line-height:16px">ENG</div>
<div class="tb t" style="left:1244.300px;top:731.500px;width:40px;text-align:center;font-size:11.800px;line-height:16px">IN</div>
<svg style="left:1290px;top:716px" width="36" height="32" viewBox="1290 716 36 32">
 <path d="M1295.500 722h17.500v12.500h-10.500l-3.500 3.500v-3.500h-3.500z" fill="#fff"/>
 <path d="M1298.500 725.500h11.500M1298.500 728.500h11.500M1298.500 731.500h8" stroke="#1e2b3b" stroke-width="1"/>
 <circle cx="1312" cy="737.500" r="7.500" fill="#1a2436" stroke="#e8e8e8" stroke-width="1.200"/>
 <text x="1312" y="741.800" font-family="Liberation Sans, sans-serif" font-size="11.500" text-anchor="middle" fill="#fff">1</text>
</svg>
<!-- VISUALIZER -->
<div class="a" style="left:736px;top:74px;width:1px;height:67px;background:#dcdcdc"></div>
<div class="tabbar" style="left:737px;top:74px;width:595.500px;height:28.500px"></div>
<div class="tab" style="left:737px;top:74px;width:79px;height:28.500px"></div>
<div class="t" style="left:742px;top:81px;font-size:12.300px">Visualizer</div>
<svg style="left:799px;top:83px" width="10" height="10" viewBox="0 0 10 10"><path d="M1 1l8 8M9 1l-8 8" stroke="#333" stroke-width="1.100"/></svg>
<div class="a" style="left:1316.500px;top:92px;width:10.500px;height:1px;background:#666"></div>
<svg style="left:740px;top:104px" width="594" height="36" viewBox="740 104 594 36">
<g transform="translate(758 124.700)" stroke="#2e2e2e" stroke-width="1.250" fill="none" stroke-linejoin="round"><path d="M0 -13.900V-9M-7.200 4.500L-12.300 7.500M7.200 4.500L12.300 7.500"/><path d="M0 -9L7.200 -3.700V4.500L0 8.600L-7.200 4.500V-3.700zM-7.200 -3.700L0 0L7.200 -3.700M0 0V8.600"/></g>
<g transform="translate(793.5 124.700)" stroke="#2e2e2e" stroke-width="1.250" fill="none" stroke-linejoin="round"><path d="M-7.200 -3.700L0 0V8.600L-7.200 4.500z" fill="#8c8c8c" stroke="none"/><path d="M7.200 -3.700L0 0V8.600L7.200 4.500z" fill="#a4a4a4" stroke="none"/><path d="M0 -13.900V-9M-7.200 4.500L-12.300 7.500M7.200 4.500L12.300 7.500"/><path d="M0 -9L7.200 -3.700V4.500L0 8.600L-7.200 4.500V-3.700zM-7.200 -3.700L0 0L7.200 -3.700M0 0V8.600"/></g>
<g transform="translate(829.2 124.700)" stroke="#2e2e2e" stroke-width="1.250" fill="none" stroke-linejoin="round"><path d="M7.200 -3.700L0 0V8.600L7.200 4.500z" fill="#8c8c8c" stroke="none"/><path d="M0 -13.900V-9M-7.200 4.500L-12.300 7.500M7.200 4.500L12.300 7.500"/><path d="M0 -9L7.200 -3.700V4.500L0 8.600L-7.200 4.500V-3.700zM-7.200 -3.700L0 0L7.200 -3.700M0 0V8.600"/></g>
<g transform="translate(864.7 124.700)" stroke="#2e2e2e" stroke-width="1.250" fill="none" stroke-linejoin="round"><path d="M0 -9L7.200 -3.700L0 0L-7.200 -3.700z" fill="#8c8c8c" stroke="none"/><path d="M0 -13.900V-9M-7.200 4.500L-12.300 7.500M7.200 4.500L12.300 7.500"/><path d="M0 -9L7.200 -3.700V4.500L0 8.600L-7.200 4.500V-3.700zM-7.200 -3.700L0 0L7.200 -3.700M0 0V8.600"/></g>
<path d="M886.500 106.700v29.300" stroke="#d6d6d6"/>
<path d="M901 114.500c1.500-1.500 3.500-.5 3 1.500 1.500-1.500 4.500-2 6-.5s.5 3.500-1 4c2 0 3 2.500 1.500 4s-3 .5-3.500-.5c.5 2 2.500 2.500 4 3.500s.5 3.500-1.500 3-2.500-2.500-4.500-3.500c-1 .5-2.500 1-3.500 0s0-2.500 1-3c-2 0-4.500 0-5.500-1.500s.5-3 2-2.500 2 1 3 .5c-1.500-1-2.500-3.500-1-5z" fill="none" stroke="#c2c2c2" stroke-width="1.200"/>
<text x="1318.700" y="125.600" font-family="Liberation Sans, sans-serif" font-size="9.700" font-weight="bold" text-anchor="middle" fill="#b8b8b8" letter-spacing="0.3">MM</text>
</svg>
<div class="a" style="left:736.800px;top:140px;width:595.700px;height:535.500px;background:#dfeafb;border:1px solid #5a5a5a;border-right:none"></div>
<svg style="left:738px;top:141px" width="596" height="534" viewBox="738 141 596 534">
<rect x="765" y="158.500" width="54" height="73.300" fill="#6b6b6b"/>
<rect x="770.500" y="163.300" width="42.500" height="37.200" fill="#dddddd"/>
<rect x="770.500" y="207.300" width="42.500" height="21.500" fill="#dddddd"/>
<text x="791.500" y="191" font-family="Liberation Sans, sans-serif" font-size="25" text-anchor="middle" fill="#333" textLength="32" lengthAdjust="spacingAndGlyphs">Z+</text>
<text x="791.500" y="222.500" font-family="Liberation Sans, sans-serif" font-size="12.500" text-anchor="middle" fill="#222" textLength="27" lengthAdjust="spacingAndGlyphs" stroke="#222" stroke-width="0.350">Y-</text>
<rect x="830.70" y="220.90" width="419.89" height="381.26" fill="#ced7e5"/>
<path d="M830.70 220.90V602.16M850.70 220.90V602.16M870.69 220.90V602.16M890.69 220.90V602.16M910.68 220.90V602.16M930.68 220.90V602.16M950.67 220.90V602.16M970.67 220.90V602.16M990.66 220.90V602.16M1010.66 220.90V602.16M1030.65 220.90V602.16M1050.64 220.90V602.16M1070.64 220.90V602.16M1090.63 220.90V602.16M1110.63 220.90V602.16M1130.62 220.90V602.16M1150.62 220.90V602.16M1170.62 220.90V602.16M1190.61 220.90V602.16M1210.61 220.90V602.16M1230.60 220.90V602.16M1250.60 220.90V602.16M830.70 220.90H1250.60M830.70 238.23H1250.60M830.70 255.56H1250.60M830.70 272.89H1250.60M830.70 290.22H1250.60M830.70 307.55H1250.60M830.70 324.88H1250.60M830.70 342.21H1250.60M830.70 359.54H1250.60M830.70 376.87H1250.60M830.70 394.20H1250.60M830.70 411.53H1250.60M830.70 428.86H1250.60M830.70 446.19H1250.60M830.70 463.52H1250.60M830.70 480.85H1250.60M830.70 498.18H1250.60M830.70 515.51H1250.60M830.70 532.84H1250.60M830.70 550.17H1250.60M830.70 567.50H1250.60M830.70 584.83H1250.60M830.70 602.16H1250.60" stroke="#b0b0b0" stroke-width="1.250" fill="none"/>
<path d="M850.70 220.90V602.16" stroke="#12d612" stroke-width="3.800"/>
<path d="M830.70 584.83H1250.60" stroke="#d81418" stroke-width="4"/>
<path d="M1058.8 541.9L1054.1 541.5L1051.4 539.4L1050.5 535.5L1050.5 521.2L1048.6 520.3L1041.9 515.6L1038.3 511.2L1037.0 506.5L1038.0 501.2L1040.6 495.9L1044.8 491.6L1050.1 489.4L1050.1 474.3" fill="none" stroke="#c9c9cf" stroke-width="0.900"/>
<path d="M1058.8 237.1L1063.5 237.7L1066.2 239.9L1067.1 243.8L1067.1 258.1L1069.0 259.1L1075.7 264.0L1079.3 268.4L1080.6 273.2L1079.6 278.4L1077.0 283.7L1072.8 287.7L1067.5 289.8L1067.5 304.9L1081.1 293.3L1086.3 290.7L1091.9 289.9L1096.3 291.4L1099.3 294.4L1100.7 297.8L1100.1 301.9L1096.1 307.6L1067.5 334.0L1067.5 354.6L1074.3 355.3L1091.9 332.0L1098.1 334.7L1102.4 336.8L1087.1 361.2L1091.3 365.6L1113.2 354.9L1125.8 320.9L1129.5 315.1L1133.5 312.5L1137.8 311.5L1142.6 312.0L1146.5 314.2L1148.7 318.6L1148.8 323.6L1144.0 339.4L1159.9 331.2L1159.2 326.3L1161.2 321.2L1165.3 316.4L1170.3 312.9L1176.0 311.2L1182.7 311.2L1191.6 313.1L1193.7 313.9L1208.8 305.8L1213.6 304.2L1217.3 304.9L1220.7 307.8M1220.7 307.8L1222.1 311.9L1220.9 315.1L1217.2 318.1L1202.1 326.1L1201.9 328.1L1199.6 335.9L1196.5 341.2L1192.1 344.8L1186.2 346.9L1179.4 347.7L1173.2 346.8L1168.6 343.9L1152.7 352.0L1171.2 356.1L1176.2 358.6L1179.7 362.4L1180.1 366.6L1178.3 370.4L1175.4 373.2L1170.8 375.0L1163.1 374.9L1121.9 367.4L1100.1 378.1L1102.7 383.4L1135.6 384.4L1135.7 390.3L1135.6 394.7L1102.7 395.7L1100.1 401.1L1121.9 412.0L1163.1 404.5L1170.8 404.5L1175.4 406.3L1178.3 409.1L1180.1 413.2L1179.7 417.4L1176.2 421.4L1171.2 423.9L1152.7 427.9L1168.6 436.4L1173.2 433.5L1179.4 432.6L1186.2 433.5L1192.1 435.8L1196.5 439.5L1199.6 445.0L1201.9 453.1L1202.1 455.2L1217.2 463.8L1220.9 466.9L1222.1 470.4L1220.7 474.6M1220.7 474.6L1217.3 477.6L1213.6 478.2L1208.8 476.4L1193.7 467.8L1191.6 468.5L1182.7 470.3L1176.0 470.2L1170.3 468.3L1165.3 464.6L1161.2 459.6L1159.2 454.3L1159.9 449.3L1144.0 440.8L1148.8 457.0L1148.7 462.1L1146.5 466.6L1142.6 468.7L1137.8 469.1L1133.5 468.1L1129.5 465.3L1125.8 459.3L1113.2 424.6L1091.3 413.6L1087.1 418.0L1102.4 442.9L1096.4 445.7L1091.9 447.5L1074.3 423.8L1067.5 424.5L1067.5 445.1L1096.1 472.3L1100.1 478.1L1100.7 482.2L1099.3 485.6L1096.3 488.6L1091.9 490.0L1086.3 489.0L1081.1 486.3L1067.5 474.3L1067.5 489.4L1072.8 491.6L1077.0 495.9L1079.6 501.2L1080.6 506.5L1079.3 511.2L1075.7 515.6L1069.0 520.3L1067.1 521.2L1067.1 535.5L1066.2 539.4L1063.5 541.5L1058.8 541.9M1050.1 474.3L1036.5 486.3L1031.3 489.0L1025.7 490.0L1021.3 488.6L1018.3 485.6L1016.9 482.2L1017.5 478.1L1021.5 472.3L1050.1 445.1L1050.1 424.5L1043.3 423.8L1025.7 447.5L1019.5 444.9L1015.2 442.9L1030.5 418.0L1026.3 413.6L1004.4 424.6L991.8 459.3L988.1 465.3L984.1 468.1L979.8 469.1L975.0 468.7L971.1 466.6L968.9 462.1L968.8 457.0L973.6 440.8L957.7 449.3L958.4 454.3L956.4 459.6L952.3 464.6L947.3 468.3L941.6 470.2L934.9 470.3L926.0 468.5L923.9 467.8L908.8 476.4L904.0 478.2L900.3 477.6L896.9 474.6M896.9 474.6L895.5 470.4L896.7 466.9L900.4 463.8L915.5 455.2L915.7 453.1L918.0 445.0L921.1 439.5L925.5 435.8L931.4 433.5L938.2 432.6L944.4 433.5L949.0 436.4L964.9 427.9L946.4 423.9L941.4 421.4L937.9 417.4L937.5 413.2L939.3 409.1L942.2 406.3L946.8 404.5L954.5 404.5L995.7 412.0L1017.5 401.1L1014.9 395.7L982.0 394.7L981.9 388.7L982.0 384.4L1014.9 383.4L1017.5 378.1L995.7 367.4L954.5 374.9L946.8 375.0L942.2 373.2L939.3 370.4L937.5 366.6L937.9 362.4L941.4 358.6L946.4 356.1L964.9 352.0L949.0 343.9L944.4 346.8L938.2 347.7L931.4 346.9L925.5 344.8L921.1 341.2L918.0 335.9L915.7 328.1L915.5 326.1L900.4 318.1L896.7 315.1L895.5 311.9L896.9 307.8M896.9 307.8L900.3 304.9L904.0 304.2L908.8 305.8L923.9 313.9L926.0 313.1L934.9 311.2L941.6 311.2L947.3 312.9L952.3 316.4L956.4 321.2L958.4 326.3L957.7 331.2L973.6 339.4L968.8 323.6L968.9 318.6L971.1 314.2L975.0 312.0L979.8 311.5L984.1 312.5L988.1 315.1L991.8 320.9L1004.4 354.9L1026.3 365.6L1030.5 361.2L1015.2 336.8L1021.2 333.9L1025.7 332.0L1043.3 355.3L1050.1 354.6L1050.1 334.0L1021.5 307.6L1017.5 301.9L1016.9 297.8L1018.3 294.4L1021.3 291.4L1025.7 289.9L1031.3 290.7L1036.5 293.3L1050.1 304.9L1050.1 289.8L1044.8 287.7L1040.6 283.7L1038.0 278.4L1037.0 273.2L1038.3 268.4L1041.9 264.0L1048.6 259.1L1050.5 258.1L1050.5 243.8L1051.4 239.9L1054.1 237.7L1058.8 237.1" fill="none" stroke="#c04d5b" stroke-width="0.950" stroke-linejoin="round"/>
<path d="M1067 336v21M1067.500 342.500v-10M1067.300 425v20M979 384.500h11M979 384.500v11.500h11M995 413l5-2M1120 414l6-2M1030 358.500l-2-1M1089 358l-2 1.500M1067.300 247v10" fill="none" stroke="#3b4aa8" stroke-width="0.900"/>
<path d="M850.7 584.8L1062.8 541.9" stroke="#2b3a9c" stroke-width="1"/>
<path d="M1036.800 432a13.100 13.100 0 0 1 26.200 0c0 5-9 28-13.100 42.500-4.100-14.500-13.100-37.500-13.100-42.500z" fill="#c9d400"/>
<g stroke="#6f7581" stroke-width="1.200" fill="none">
<path d="M814.500 238V584.8M802 238h24M802 584.8h24"/>
<path d="M850.200 615.600H1221.400M850.200 605.700v20.200M1221.400 605.700v20.200"/>
<path d="M1250 584.8h19.500"/>
</g>
<text transform="translate(813 441) rotate(-90)" font-family="Liberation Sans, sans-serif" font-size="15" textLength="59.600" lengthAdjust="spacingAndGlyphs" fill="#868d96">96.95 mm</text>
<text x="1002" y="626.200" font-family="Liberation Sans, sans-serif" font-size="13.800" textLength="68.400" lengthAdjust="spacingAndGlyphs" fill="#868d96">89.94 mm</text>
<text x="1259" y="587.600" font-family="Liberation Sans, sans-serif" font-size="14.600" textLength="37.600" lengthAdjust="spacingAndGlyphs" fill="#868d96">0 mm</text>
<text x="1327" y="672" font-family="Liberation Sans, sans-serif" font-size="6.500" font-weight="bold" text-anchor="end" fill="#fff">FPS: 15.06</text>
</svg>
</body></html>
